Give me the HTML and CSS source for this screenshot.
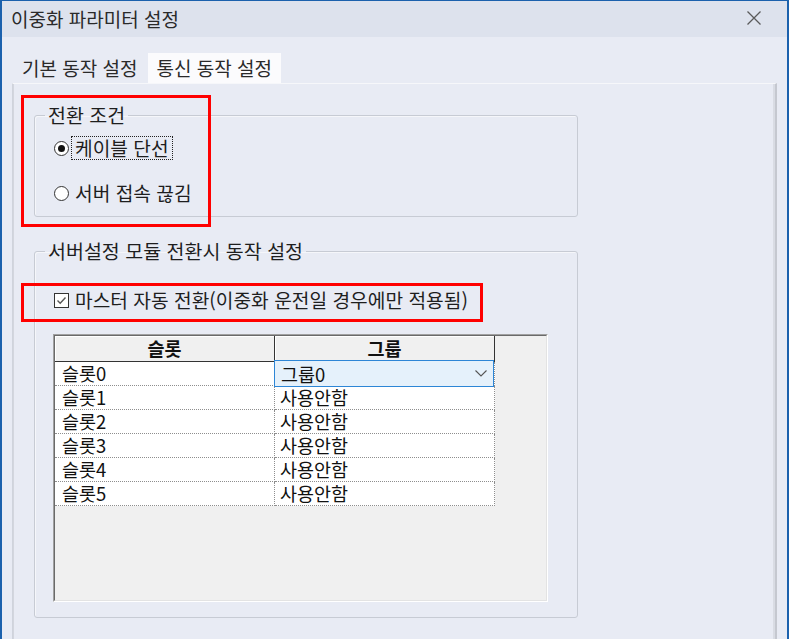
FILE: index.html
```html
<!DOCTYPE html>
<html lang="ko">
<head>
<meta charset="utf-8">
<title>이중화 파라미터 설정</title>
<link rel="stylesheet" href="styles.css">
</head>
<body>
<div class="window">
  <div class="titlebar">
    <span class="title">이중화 파라미터 설정</span>
    <svg class="close" width="16" height="16" viewBox="0 0 16 16"><path d="M1.5 1.5 L14.5 14.5 M14.5 1.5 L1.5 14.5" stroke="#5a5a5a" stroke-width="1.3" fill="none"/></svg>
  </div>
  <div class="client">
    <div class="tabs">
      <div class="tab">기본 동작 설정</div>
      <div class="tab active">통신 동작 설정</div>
    </div>
    <div class="panel">
      <fieldset class="group g1">
        <legend>전환 조건</legend>
        <div class="opts">
          <div class="opt"><span class="radio on"></span><span class="lbl focus">케이블 단선</span></div>
          <div class="opt"><span class="radio"></span><span class="lbl">서버 접속 끊김</span></div>
        </div>
      </fieldset>
      <fieldset class="group g2">
        <legend>서버설정 모듈 전환시 동작 설정</legend>
        <div class="opt chk-row"><span class="check"><svg width="13" height="13" viewBox="0 0 13 13"><path d="M2.5 6.5 L5.2 9.2 L10.5 3.5" stroke="#555" stroke-width="1.4" fill="none"/></svg></span><span class="lbl">마스터 자동 전환(이중화 운전일 경우에만 적용됨)</span></div>
        <div class="grid">
          <div class="grid-in">
            <div class="hrow"><div class="hcell">슬롯</div><div class="hcell">그룹</div></div>
            <div class="row"><div class="cell c1">슬롯0</div><div class="cell c2 editing"><div class="combo"><span>그룹0</span><svg width="12" height="7" viewBox="0 0 12 7"><path d="M0.5 0.5 L6 6 L11.5 0.5" stroke="#555" stroke-width="1.1" fill="none"/></svg></div></div></div>
            <div class="row"><div class="cell c1">슬롯1</div><div class="cell c2">사용안함</div></div>
            <div class="row"><div class="cell c1">슬롯2</div><div class="cell c2">사용안함</div></div>
            <div class="row"><div class="cell c1">슬롯3</div><div class="cell c2">사용안함</div></div>
            <div class="row"><div class="cell c1">슬롯4</div><div class="cell c2">사용안함</div></div>
            <div class="row"><div class="cell c1">슬롯5</div><div class="cell c2">사용안함</div></div>
          </div>
        </div>
      </fieldset>
    </div>
  </div>
  <div class="mark m1"></div>
  <div class="mark m2"></div>
</div>
</body>
</html>
```

FILE: styles.css
```css
* { box-sizing: border-box; }
html, body { margin: 0; padding: 0; background: #e8ebf4; }
body {
  font-family: "Noto Sans CJK KR", "Noto Sans", sans-serif;
  color: #1e1e1e;
}
.window {
  position: relative;
  width: 789px;
  height: 639px;
  overflow: hidden;
  border: 2px solid #1b61ad;
  border-top-width: 1px;
  border-bottom: none;
  background: #e8ebf4;
  display: flex;
  flex-direction: column;
}
.titlebar {
  height: 36px;
  flex: none;
  background: #dde2ed;
  display: flex;
  align-items: center;
  justify-content: space-between;
  padding: 0 25px 0 9px;
}
.title {
  font-size: 19px;
  line-height: 36px;
  color: #2a2a2a;
}
.close { display: block; margin-top: -3px; }
.client {
  flex: 1;
  display: flex;
  flex-direction: column;
}
.tabs {
  display: flex;
  margin: 16px 0 0 10px;
  height: 30px;
}
.tab {
  padding: 0 10px;
  font-size: 19px;
  line-height: 29px;
  color: #2a2a2a;
}
.tab.active {
  background: #fbfbfd;
  padding: 0 9px;
}
.panel {
  margin: 0 10px;
  height: 580px;
  flex: none;
  border: 1px solid #cfd3dc;
  border-top-color: #f6f7fa;
  border-right: 2px solid #c5c8d0;
  box-shadow: inset -2px 0 #d9dce4, inset 1px 0 #d3d6de;
  padding: 19px 0 0 21px;
}
.group {
  margin: 0;
  width: 544px;
  border: 1px solid #c7cbd4;
  border-radius: 3px;
  box-shadow: inset 1px 1px #f5f6fa;
  padding: 0;
  min-width: 0;
}
.group legend {
  margin-left: -9px;
  padding: 0 3px;
  font-size: 19.5px;
  line-height: 24px;
  color: #1e1e1e;
}
.g1 { padding: 8px 0 10px 19px; }
.opts { display: flex; flex-direction: column; gap: 19px; }
.opt {
  display: flex;
  align-items: center;
  height: 26px;
}
.radio {
  width: 15px;
  height: 15px;
  border-radius: 50%;
  border: 1px solid #333;
  background: #fff;
  display: flex;
  align-items: center;
  justify-content: center;
  flex: none;
}
.radio.on::after {
  content: "";
  width: 7px;
  height: 7px;
  border-radius: 50%;
  background: #111;
}
.lbl {
  margin-left: 2px;
  padding: 0 3px;
  border: 1px dotted transparent;
  font-size: 19.2px;
  line-height: 22px;
}
.lbl.focus { border-color: #222; }
.g2 { margin-top: 22px; padding: 24px 0 15px 19px; }
.check {
  width: 15px;
  height: 15px;
  border: 1px solid #333;
  background: #fff;
  flex: none;
  display: flex;
  align-items: center;
  justify-content: center;
}
.check svg { display: block; }
.grid {
  margin: 21px 0 0 -1px;
  width: 495px;
  height: 268px;
  border: 1px solid;
  border-color: #a0a0a0 #ffffff #ffffff #a0a0a0;
}
.grid-in {
  height: 100%;
  border: 1px solid;
  border-color: #6a6a6a #e3e3e3 #e3e3e3 #6a6a6a;
  background: #f0f0f0;
}
.hrow { display: flex; height: 26px; }
.hcell {
  width: 220px;
  background: #f0f0f0;
  border-right: 1px solid #333;
  border-bottom: 1px solid #333;
  box-shadow: inset 1px 1px #fff;
  font-size: 18.5px;
  font-weight: 700;
  line-height: 25px;
  text-align: center;
  color: #111;
}
.row { display: flex; height: 24px; }
.cell {
  width: 220px;
  background: #fff;
  border-right: 1px dotted #8e8e8e;
  border-bottom: 1px dotted #8e8e8e;
  font-size: 18.5px;
  line-height: 23px;
  color: #111;
}
.c1 { padding-left: 7px; }
.c2 { padding-left: 5px; }
.editing { position: relative; }
.combo {
  position: absolute;
  left: -1px;
  right: 0;
  top: -2px;
  bottom: -2px;
  background: #e5f1fb;
  border: 1px solid #2d86d6;
  display: flex;
  align-items: center;
  justify-content: space-between;
  padding: 0 6px 0 6px;
  font-size: 18.5px;
  line-height: 22px;
}
.combo svg { display: block; margin-right: 0; }
.mark {
  position: absolute;
  border: 3px solid #ff0000;
}
.m1 { left: 19px; top: 94px; width: 190px; height: 132px; }
.m2 { left: 19px; top: 282px; width: 462px; height: 39px; }
```
